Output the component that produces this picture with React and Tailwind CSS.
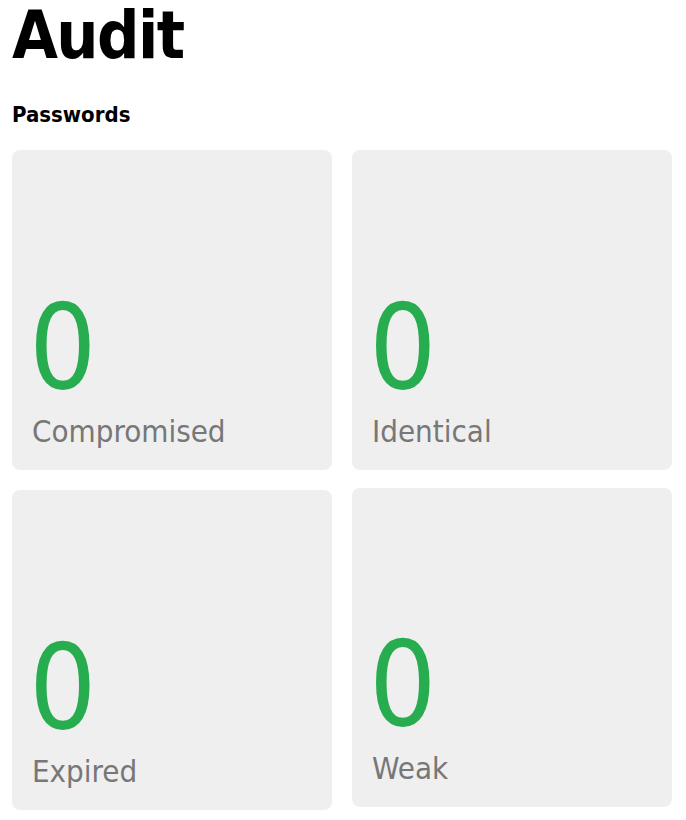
import React from "react";

const stats = [
    { label: "Compromised", count: 0 },
    { label: "Identical", count: 0 },
    { label: "Expired", count: 0 },
    { label: "Weak", count: 0, nudge: true },
];

function StatCard({ label, count, nudge }) {
    return (
        <div
            className={`rounded-[8px] bg-[#efefef] flex flex-col justify-end pl-[20px] pb-[23px] ${nudge ? "h-[319px] -mt-[2px] mb-[3px]" : "h-[320px]"}`}
        >
            <div className="text-[118px] leading-none text-[#27ad4f] -ml-[3px]">{count}</div>
            <div className="text-[31px] leading-none text-[#777777] mt-[10px]">{label}</div>
        </div>
    );
}

export default function App() {
    return (
        <div
            className="min-h-screen bg-white px-[12px]"
            style={{ fontFamily: '"DejaVu Sans Condensed", "DejaVu Sans", sans-serif' }}
        >
            <h1 className="text-[66px] font-bold leading-[72px] tracking-[-1.6px] text-black">Audit</h1>
            <h2 className="text-[22px] font-bold leading-none text-black mt-[32px]">Passwords</h2>
            <div className="grid grid-cols-2 gap-[20px] mt-[24px] w-[660px]">
                {stats.map((s) => (
                    <StatCard key={s.label} {...s} />
                ))}
            </div>
        </div>
    );
}
